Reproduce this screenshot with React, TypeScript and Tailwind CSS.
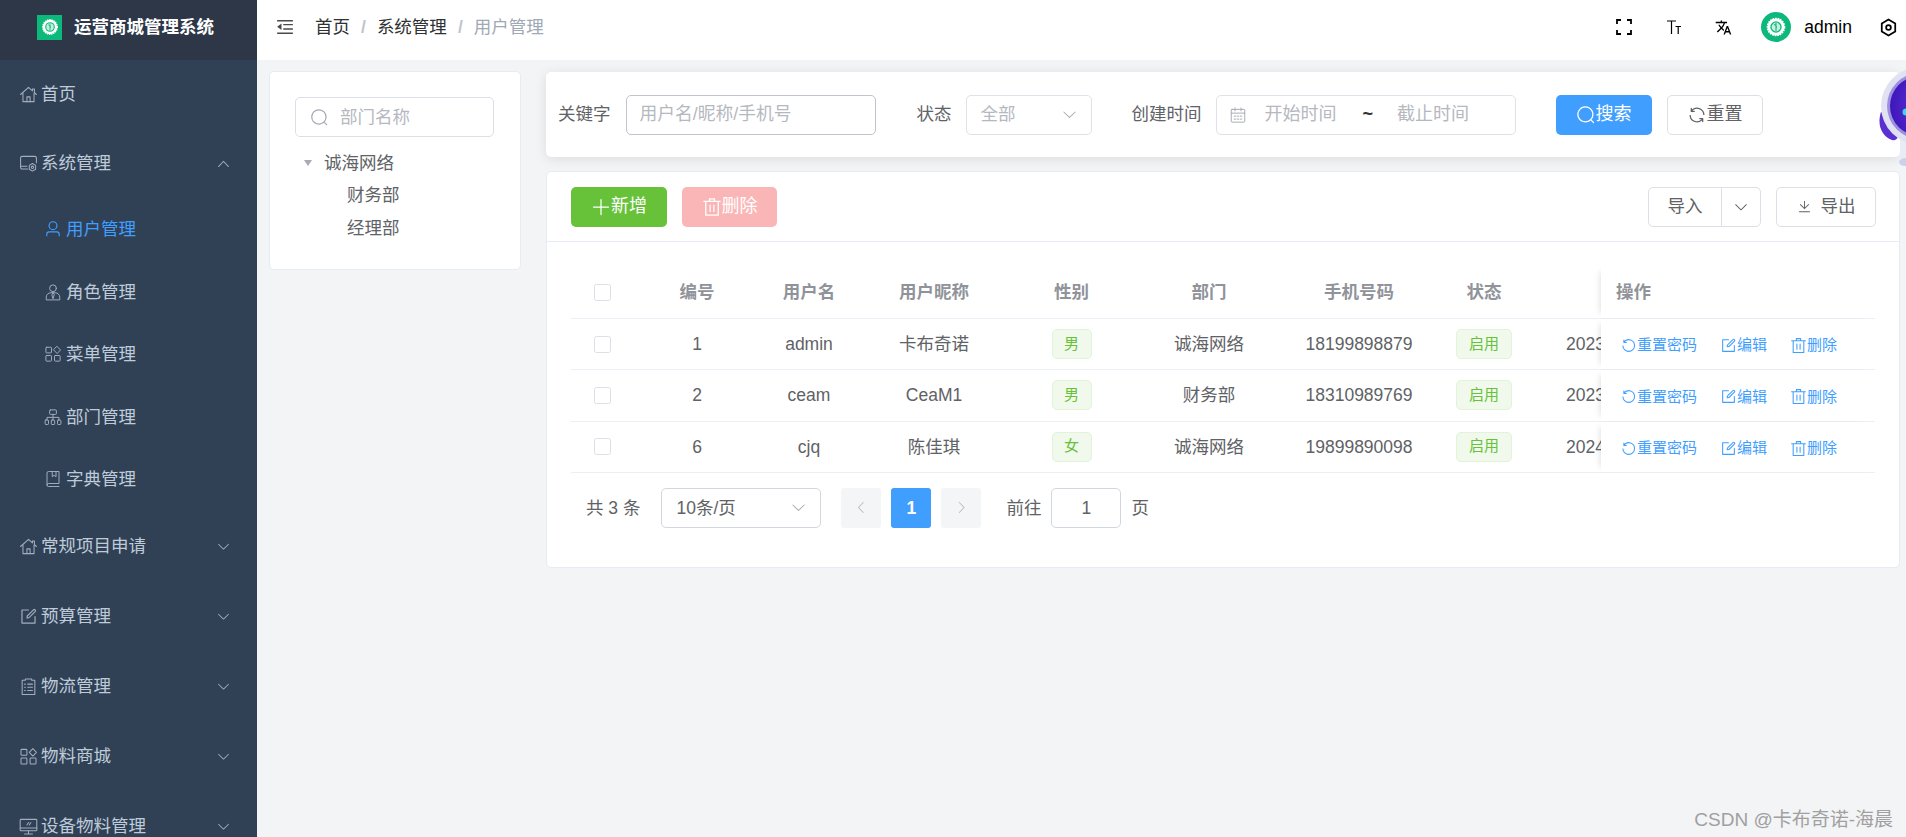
import type { ReactNode } from 'react';
import { MdTranslate } from 'react-icons/md';

type IconProps = { className?: string };

const Stroke = ({ className, children }: IconProps & { children: ReactNode }) => (
  <svg viewBox="0 0 24 24" fill="none" stroke="currentColor" strokeWidth="1.3" strokeLinejoin="round" strokeLinecap="round" className={className}>
    {children}
  </svg>
);

const Solid = ({ className, d }: IconProps & { d: string }) => (
  <svg viewBox="0 0 1024 1024" fill="currentColor" className={className}>
    <path d={d} />
  </svg>
);

const Icon = {
  Search: (p: IconProps) => <Solid {...p} d="m795.904 750.72 124.992 124.928a32 32 0 0 1-45.248 45.248L750.656 795.904a416 416 0 1 1 45.248-45.248zM480 832a352 352 0 1 0 0-704 352 352 0 0 0 0 704" />,
  Down: (p: IconProps) => <Solid {...p} d="M831.872 340.864 512 652.672 192.128 340.864a30.592 30.592 0 0 0-42.752 0 29.12 29.12 0 0 0 0 41.6L489.664 714.24a32 32 0 0 0 44.672 0l340.288-331.712a29.12 29.12 0 0 0 0-41.728 30.592 30.592 0 0 0-42.752 0z" />,
  Up: (p: IconProps) => <Solid {...p} d="m488.832 344.32-339.84 356.672a32 32 0 0 0 0 44.16l.384.384a29.44 29.44 0 0 0 42.688 0l320-335.872 319.872 335.872a29.44 29.44 0 0 0 42.688 0l.384-.384a32 32 0 0 0 0-44.16L535.168 344.32a32 32 0 0 0-46.336 0" />,
  Left: (p: IconProps) => <Solid {...p} d="M609.408 149.376 277.76 489.6a32 32 0 0 0 0 44.672l331.648 340.352a29.12 29.12 0 0 0 41.728 0 30.592 30.592 0 0 0 0-42.752L339.264 511.936l311.872-319.872a30.592 30.592 0 0 0 0-42.688 29.12 29.12 0 0 0-41.728 0z" />,
  Right: (p: IconProps) => <Solid {...p} d="M340.864 149.312a30.592 30.592 0 0 0 0 42.752L652.736 512 340.864 831.872a30.592 30.592 0 0 0 0 42.752 29.12 29.12 0 0 0 41.728 0L714.24 534.336a32 32 0 0 0 0-44.672L382.592 149.376a29.12 29.12 0 0 0-41.728 0z" />,
  Plus: (p: IconProps) => <Solid {...p} d="M480 480V128a32 32 0 0 1 64 0v352h352a32 32 0 1 1 0 64H544v352a32 32 0 1 1-64 0V544H128a32 32 0 0 1 0-64z" />,
  Trash: (p: IconProps) => <Solid {...p} d="M160 256H96a32 32 0 0 1 0-64h256V95.936a32 32 0 0 1 32-32h256a32 32 0 0 1 32 32V192h256a32 32 0 1 1 0 64h-64v672a32 32 0 0 1-32 32H192a32 32 0 0 1-32-32zm448-64v-64H416v64zM224 896h576V256H224zm192-128a32 32 0 0 1-32-32V416a32 32 0 0 1 64 0v320a32 32 0 0 1-32 32m192 0a32 32 0 0 1-32-32V416a32 32 0 0 1 64 0v320a32 32 0 0 1-32 32" />,
  Refresh: (p: IconProps) => <Solid {...p} d="M771.776 794.88A384 384 0 0 1 128 512h64a320 320 0 0 0 555.712 216.448H654.72a32 32 0 1 1 0-64h149.056a32 32 0 0 1 32 32v148.928a32 32 0 1 1-64 0v-50.56zM276.288 295.616h92.992a32 32 0 0 1 0 64H220.16a32 32 0 0 1-32-32V178.56a32 32 0 0 1 64 0v50.56A384 384 0 0 1 896.128 512h-64a320 320 0 0 0-555.776-216.384z" />,
  RefreshLeft: (p: IconProps) => <Solid {...p} d="M289.088 296.704h92.992a32 32 0 0 1 0 64H232.96a32 32 0 0 1-32-32V179.712a32 32 0 0 1 64 0v50.56a384 384 0 0 1 643.84 282.88 384 384 0 0 1-383.936 384 384 384 0 0 1-384-384h64a320 320 0 1 0 640 0 320 320 0 0 0-555.712-216.448z" />,
  Edit: (p: IconProps) => (
    <svg viewBox="0 0 1024 1024" fill="currentColor" className={p.className}>
      <path d="M832 512a32 32 0 1 1 64 0v352a32 32 0 0 1-32 32H160a32 32 0 0 1-32-32V160a32 32 0 0 1 32-32h352a32 32 0 0 1 0 64H192v640h640z" />
      <path d="m469.952 554.24 52.8-7.552L847.104 222.4a32 32 0 1 0-45.248-45.248L477.44 501.44l-7.552 52.8zm422.4-422.4a96 96 0 0 1 0 135.808l-331.84 331.84a32 32 0 0 1-18.112 9.088L436.8 623.68a32 32 0 0 1-36.224-36.224l15.104-105.6a32 32 0 0 1 9.024-18.112l331.904-331.84a96 96 0 0 1 135.744 0z" />
    </svg>
  ),
  Download: (p: IconProps) => <Solid {...p} d="M160 832h704a32 32 0 1 1 0 64H160a32 32 0 1 1 0-64m384-253.696 236.288-236.352 45.248 45.248L508.8 704 192 387.2l45.248-45.248L480 584.704V128h64z" />,
  User: (p: IconProps) => <Solid {...p} d="M512 512a192 192 0 1 0 0-384 192 192 0 0 0 0 384m0 64a256 256 0 1 1 0-512 256 256 0 0 1 0 512m320 320v-96a96 96 0 0 0-96-96H288a96 96 0 0 0-96 96v96a32 32 0 1 1-64 0v-96a160 160 0 0 1 160-160h448a160 160 0 0 1 160 160v96a32 32 0 1 1-64 0" />,
  Home: (p: IconProps) => (
    <Stroke {...p}>
      <path d="M2 12 12 3l5 4.5V5h2.500v4.800L22 12" />
      <path d="M5 10v11h14V10" />
      <path d="M10 21v-6h4v6" />
    </Stroke>
  ),
  System: (p: IconProps) => (
    <Stroke {...p}>
      <path d="M11 19H4a2 2 0 0 1-2-2V5a2 2 0 0 1 2-2h16a2 2 0 0 1 2 2v6" />
      <path d="M2 15.500h8" />
      <path d="m17 12 4 2.400v4.800L17 21.600l-4-2.400v-4.800z" />
      <circle cx="17" cy="16.800" r="1.500" />
    </Stroke>
  ),
  Role: (p: IconProps) => (
    <Stroke {...p}>
      <circle cx="12" cy="7" r="4.500" />
      <path d="M3 22v-3a6 6 0 0 1 6-6h6a6 6 0 0 1 6 6v3z" />
      <path d="m12 13-1.500 3 1.500 5 1.500-5z" />
    </Stroke>
  ),
  Menu: (p: IconProps) => (
    <Stroke {...p}>
      <rect x="2.500" y="3" width="7.500" height="7.500" rx="1" />
      <path d="m17.500 2 4.500 4.700-4.500 4.700L13 6.700z" />
      <rect x="2.500" y="14" width="7.500" height="7.500" rx="1" />
      <rect x="14" y="14" width="7.500" height="7.500" rx="1" />
    </Stroke>
  ),
  Dept: (p: IconProps) => (
    <Stroke {...p}>
      <rect x="7.500" y="2.500" width="9" height="6" rx="1" />
      <path d="M4 16v-3.500h16V16M12 8.500V16" />
      <rect x="1.500" y="16" width="4.500" height="6" rx="1" />
      <rect x="9.700" y="16" width="4.500" height="6" rx="1" />
      <rect x="18" y="16" width="4.500" height="6" rx="1" />
    </Stroke>
  ),
  Book: (p: IconProps) => (
    <Stroke {...p}>
      <path d="M4 20V4a2 2 0 0 1 2-2h14v16H6a2 2 0 0 0 0 4h14" />
      <path d="M11 2v7l2.500-2L16 9V2" />
    </Stroke>
  ),
  Doc: (p: IconProps) => (
    <Stroke {...p}>
      <path d="M4 4h4V2.500h8V4h4v18H4z" />
      <path d="M7 9h1M11 9h6M7 13h1M11 13h6M7 17h1M11 17h6" />
    </Stroke>
  ),
  Monitor: (p: IconProps) => (
    <Stroke {...p}>
      <rect x="1.500" y="3" width="21" height="14.500" rx="1" />
      <path d="M1.500 14h21M12 17.500V21M7 21.500h10M10 10l2-3M13 10l2-3" />
    </Stroke>
  ),
  Calendar: (p: IconProps) => (
    <Stroke {...p}>
      <rect x="3" y="4.500" width="18" height="17" rx="1" />
      <path d="M3 9.500h18M8 2.500v4M16 2.500v4M7 13.500h2M11 13.500h2M15 13.500h2M7 17.500h2M11 17.500h2M15 17.500h2" />
    </Stroke>
  ),
};

const Logo = ({ className }: IconProps) => (
  <svg viewBox="0 0 32 32" className={className}>
    <circle cx="16" cy="16" r="10.500" fill="#fff" stroke="#fff" strokeWidth="2" strokeDasharray="2 1.200" />
    <circle cx="16" cy="16" r="7" fill="#0cb87a" />
    <circle cx="16" cy="16" r="5.400" fill="#c9f0df" />
    <path d="M16 11v10M13.500 13c2 .3 3 1.600 3.200 4" fill="none" stroke="#0cb87a" strokeWidth="1.300" />
  </svg>
);

type NavItem = { label: string; icon: (p: IconProps) => ReactNode; arrow?: 'up' | 'down' };

const SUB_ITEMS: (NavItem & { active?: boolean })[] = [
  { label: '用户管理', icon: Icon.User, active: true },
  { label: '角色管理', icon: Icon.Role },
  { label: '菜单管理', icon: Icon.Menu },
  { label: '部门管理', icon: Icon.Dept },
  { label: '字典管理', icon: Icon.Book },
];

const LOWER_ITEMS: NavItem[] = [
  { label: '常规项目申请', icon: Icon.Home, arrow: 'down' },
  { label: '预算管理', icon: Icon.Edit, arrow: 'down' },
  { label: '物流管理', icon: Icon.Doc, arrow: 'down' },
  { label: '物料商城', icon: Icon.Menu, arrow: 'down' },
  { label: '设备物料管理', icon: Icon.Monitor, arrow: 'down' },
];

const TopItem = ({ item, tall }: { item: NavItem; tall?: boolean }) => (
  <div className={`flex shrink-0 items-center pl-[19px] pr-[26px] ${tall ? 'h-[70px]' : 'h-[69px]'}`}>
    <item.icon className="h-[19px] w-[19px] shrink-0 text-[#a3aebd]" />
    <span className="ml-[3px] flex-1">{item.label}</span>
    {item.arrow === 'up' && <Icon.Up className="h-[15px] w-[15px] text-[#a3aebd]" />}
    {item.arrow === 'down' && <Icon.Down className="h-[15px] w-[15px] text-[#a3aebd]" />}
  </div>
);

const Sidebar = () => (
  <aside className="flex w-[257px] shrink-0 flex-col overflow-hidden bg-[#304156] text-[17.5px] text-[#bfcbd9]">
    <div className="h-[60px] shrink-0 bg-[#2d3748]">
      <div className="flex h-[54px] items-center pl-[37px]">
        <div className="flex h-[25px] w-[25px] items-center justify-center bg-[#0cb87a]">
          <Logo className="h-[22px] w-[22px]" />
        </div>
        <span className="ml-[12px] font-bold text-white">运营商城管理系统</span>
      </div>
    </div>
    <TopItem item={{ label: '首页', icon: Icon.Home }} />
    <TopItem item={{ label: '系统管理', icon: Icon.System, arrow: 'up' }} />
    <div className="mb-[0.500px] flex shrink-0 flex-col">
      {SUB_ITEMS.map((s) => (
        <div key={s.label} className={`flex h-[62.500px] items-center pl-[44px] ${s.active ? 'text-[#409eff]' : ''}`}>
          <s.icon className={`h-[18px] w-[18px] shrink-0 ${s.active ? '' : 'text-[#a3aebd]'}`} />
          <span className="ml-[4px]">{s.label}</span>
        </div>
      ))}
    </div>
    {LOWER_ITEMS.map((it) => (
      <TopItem key={it.label} item={it} tall />
    ))}
  </aside>
);

const Navbar = () => (
  <header className="h-[60px] shrink-0 bg-white">
    <div className="flex h-[54px] items-center text-[17.5px] text-[#303133]">
      <svg viewBox="0 0 18 16" className="ml-[20px] h-[14px] w-[16px]" fill="#4a4a4a">
        <path d="M0 0h18v1.600H0zM7 4.500h11v1.600H7zM7 9.500h11v1.600H7zM0 14.400h18V16H0zM5 4v7.500L0 7.750z" />
      </svg>
      <span className="ml-[22px]">首页</span>
      <span className="mx-[11px] font-bold text-[#c0c4cc]">/</span>
      <span>系统管理</span>
      <span className="mx-[11px] font-bold text-[#c0c4cc]">/</span>
      <span className="text-[#a0a8b4]">用户管理</span>
      <div className="ml-auto flex items-center text-black">
        <svg viewBox="0 0 16 16" className="h-[16px] w-[16px]" fill="none" stroke="currentColor" strokeWidth="1.800">
          <path d="M1 5V1h4M11 1h4v4M15 11v4h-4M5 15H1v-4" />
        </svg>
        <svg viewBox="0 0 16 16" className="ml-[34px] h-[16px] w-[16px]" fill="none" stroke="currentColor" strokeWidth="1.200">
          <path d="M1 2h9M5.500 2v13M9.500 7.500H15M12.200 7.500V15" />
        </svg>
        <MdTranslate className="ml-[33px] h-[17px] w-[17px]" />
        <div className="ml-[29px] flex h-[30px] w-[30px] items-center justify-center rounded-full bg-[#0cb87a]">
          <Logo className="h-[26px] w-[26px]" />
        </div>
        <span className="ml-[13px]">admin</span>
        <svg viewBox="0 0 24 24" className="ml-[27px] mr-[8px] h-[19px] w-[19px]" fill="none" stroke="currentColor" strokeWidth="2.200">
          <path d="m12 2 8.500 5v10L12 22l-8.500-5V7z" />
          <circle cx="12" cy="12" r="3" />
        </svg>
      </div>
    </div>
  </header>
);

const TreePanel = () => (
  <div className="-mt-[1px] h-[199px] w-[252px] shrink-0 rounded-[5px] border border-[#e6ebf5] bg-white pl-[25px] pt-[25px] text-[17.5px] text-[#606266]">
    <div className="flex h-[40px] w-[199px] items-center rounded-[5px] border border-[#dcdfe6] pl-[14px] text-[#b5b8bf]">
      <Icon.Search className="h-[19px] w-[19px] text-[#a8abb2]" />
      <span className="ml-[11px]">部门名称</span>
    </div>
    <div className="mt-[10px] flex h-[32px] items-center">
      <span className="ml-[9px] h-0 w-0 border-x-[4.500px] border-t-[6px] border-x-transparent border-t-[#a8abb2]" />
      <span className="ml-[12px]">诚海网络</span>
    </div>
    <div className="flex h-[33px] items-center pl-[52px]">财务部</div>
    <div className="flex h-[33px] items-center pl-[52px]">经理部</div>
  </div>
);

const FilterBar = () => (
  <div className="flex h-[85px] shrink-0 items-center rounded-[5px] bg-white pl-[12px] text-[17.5px] text-[#606266] shadow-[0_2px_12px_rgba(0,0,0,0.1)]">
    <span>关键字</span>
    <div className="ml-[15px] flex h-[40px] w-[250px] items-center rounded-[5px] border border-[#c0c4cc] pl-[13px] text-[17.8px] text-[#b5b8bf]">用户名/昵称/手机号</div>
    <span className="ml-[41px]">状态</span>
    <div className="ml-[14px] flex h-[40px] w-[126px] items-center justify-between rounded-[5px] border border-[#dfe2e9] pl-[14px] pr-[13px] text-[#b5b8bf]">
      全部
      <Icon.Down className="h-[17px] w-[17px] text-[#a8abb2]" />
    </div>
    <span className="ml-[40px]">创建时间</span>
    <div className="ml-[14px] flex h-[40px] w-[300px] items-center rounded-[5px] border border-[#dfe2e9] pl-[12px] text-[18px] text-[#b5b8bf]">
      <Icon.Calendar className="h-[18px] w-[18px] text-[#a8abb2]" />
      <span className="ml-[18px] w-[72px]">开始时间</span>
      <span className="ml-[26px] font-bold text-[#303133]">~</span>
      <span className="ml-[24px]">截止时间</span>
    </div>
    <button className="ml-[40px] flex h-[40px] w-[96px] items-center justify-center rounded-[5px] bg-[#409eff] text-[18px] text-white">
      <Icon.Search className="h-[20px] w-[20px]" />
      搜索
    </button>
    <button className="ml-[15px] flex h-[40px] w-[96px] items-center justify-center rounded-[5px] border border-[#dcdfe6] text-[18px] text-[#606266]">
      <Icon.Refresh className="h-[20px] w-[20px]" />
      重置
    </button>
  </div>
);

const COLS = [
  { title: '编号', w: 'w-[126px]' },
  { title: '用户名', w: 'w-[98px]' },
  { title: '用户昵称', w: 'w-[152px]' },
  { title: '性别', w: 'w-[123px]' },
  { title: '部门', w: 'w-[152px]' },
  { title: '手机号码', w: 'w-[148px]' },
  { title: '状态', w: 'w-[102px]' },
];

const ROWS = [
  { id: 1, name: 'admin', nick: '卡布奇诺', sex: '男', dept: '诚海网络', phone: '18199898879', date: '2023-11-20 10:12:45' },
  { id: 2, name: 'ceam', nick: 'CeaM1', sex: '男', dept: '财务部', phone: '18310989769', date: '2023-12-06 14:30:18' },
  { id: 6, name: 'cjq', nick: '陈佳琪', sex: '女', dept: '诚海网络', phone: '19899890098', date: '2024-01-09 09:05:33' },
];

const Tag = ({ children, w }: { children: ReactNode; w: string }) => (
  <span className={`inline-flex h-[30px] items-center justify-center rounded-[5px] border border-[#e1f3d8] bg-[#f0f9eb] text-[15px] text-[#67c23a] ${w}`}>{children}</span>
);

const Checkbox = () => (
  <div className="flex w-[63px] shrink-0 justify-center">
    <span className="h-[17px] w-[17px] rounded-[2.500px] border border-[#dcdfe6] bg-white" />
  </div>
);

const ACTION_CELL = 'relative z-10 flex h-full w-[274px] shrink-0 items-center bg-white shadow-[-6px_0_6px_-5px_rgba(0,0,0,0.12)]';

const UserTable = () => (
  <div className="ml-[24px] mt-[25px] w-[1304px] text-[17.5px] text-[#606266]">
    <div className="flex h-[52px] items-center border-b border-[#ebeef5] font-bold text-[#909399]">
      <Checkbox />
      {COLS.map((c) => (
        <div key={c.title} className={`${c.w} shrink-0 text-center`}>{c.title}</div>
      ))}
      <div className="w-[66px] shrink-0" />
      <div className={`${ACTION_CELL} pl-[15px]`}>操作</div>
    </div>
    {ROWS.map((r) => (
      <div key={r.id} className="flex h-[51.250px] items-center border-b border-[#ebeef5]">
        <Checkbox />
        <div className="w-[126px] shrink-0 text-center">{r.id}</div>
        <div className="w-[98px] shrink-0 text-center">{r.name}</div>
        <div className="w-[152px] shrink-0 text-center">{r.nick}</div>
        <div className="w-[123px] shrink-0 text-center"><Tag w="w-[40px]">{r.sex}</Tag></div>
        <div className="w-[152px] shrink-0 text-center">{r.dept}</div>
        <div className="w-[148px] shrink-0 text-center">{r.phone}</div>
        <div className="w-[102px] shrink-0 text-center"><Tag w="w-[56px]">启用</Tag></div>
        <div className="w-[66px] shrink-0 overflow-hidden whitespace-nowrap pl-[31px]">{r.date}</div>
        <div className={`${ACTION_CELL} pl-[19px] pt-[3px] text-[15px] text-[#409eff]`}>
          <Icon.RefreshLeft className="h-[17px] w-[17px]" />
          <span>重置密码</span>
          <Icon.Edit className="ml-[23px] h-[17px] w-[17px]" />
          <span>编辑</span>
          <Icon.Trash className="ml-[23px] h-[17px] w-[17px]" />
          <span>删除</span>
        </div>
      </div>
    ))}
  </div>
);

const Pagination = () => (
  <div className="ml-[39px] mt-[15px] flex h-[40px] items-center text-[17.5px] text-[#606266]">
    <span className="whitespace-pre">共 3 条</span>
    <div className="ml-[21px] flex h-[40px] w-[160px] items-center justify-between rounded-[5px] border border-[#d3d6de] pl-[14px] pr-[13px]">
      10条/页
      <Icon.Down className="h-[17px] w-[17px] text-[#a8abb2]" />
    </div>
    <div className="ml-[20px] flex h-[40px] w-[40px] items-center justify-center rounded-[3px] bg-[#f4f5f7] text-[#b4b7bd]">
      <Icon.Left className="h-[15px] w-[15px]" />
    </div>
    <div className="ml-[10px] flex h-[40px] w-[40px] items-center justify-center rounded-[3px] bg-[#409eff] font-bold text-white">1</div>
    <div className="ml-[10px] flex h-[40px] w-[40px] items-center justify-center rounded-[3px] bg-[#f4f5f7] text-[#b4b7bd]">
      <Icon.Right className="h-[15px] w-[15px]" />
    </div>
    <span className="ml-[25px]">前往</span>
    <div className="ml-[10px] flex h-[40px] w-[70px] items-center justify-center rounded-[5px] border border-[#d3d6de]">1</div>
    <span className="ml-[10px]">页</span>
  </div>
);

const TableCard = () => (
  <div className="h-[397px] shrink-0 rounded-[5px] border border-[#e6ebf5] bg-white">
    <div className="flex h-[70px] items-center justify-between border-b border-[#e6ebf5] pl-[24px] pr-[23px] text-[17.5px]">
      <div className="flex items-center gap-[15px] text-[18px] text-white">
        <button className="flex h-[40px] w-[96px] items-center justify-center rounded-[5px] bg-[#67c23a]">
          <Icon.Plus className="h-[20px] w-[20px]" />
          新增
        </button>
        <button className="flex h-[40px] w-[95px] items-center justify-center rounded-[5px] bg-[#fab6b6]">
          <Icon.Trash className="h-[20px] w-[20px]" />
          删除
        </button>
      </div>
      <div className="flex items-center gap-[15px] text-[#606266]">
        <div className="flex h-[40px] w-[113px] items-center rounded-[5px] border border-[#dcdfe6]">
          <span className="flex h-full w-[73px] items-center justify-center border-r border-[#dcdfe6]">导入</span>
          <Icon.Down className="ml-[11px] h-[16px] w-[16px]" />
        </div>
        <div className="flex h-[40px] w-[100px] items-center justify-center rounded-[5px] border border-[#dcdfe6]">
          <Icon.Download className="h-[15px] w-[15px]" />
          <span className="ml-[9px]">导出</span>
        </div>
      </div>
    </div>
    <UserTable />
    <Pagination />
  </div>
);

const Assistant = () => (
  <svg viewBox="0 0 28 100" className="absolute right-0 top-[66px] h-[100px] w-[28px]">
    <defs>
      <radialGradient id="visor" cx="80%" cy="50%" r="80%">
        <stop offset="0%" stopColor="#6a3ff0" />
        <stop offset="100%" stopColor="#3e17b8" />
      </radialGradient>
    </defs>
    <rect x="22" y="70" width="6" height="30" fill="#e9ebf5" />
    <ellipse cx="28" cy="96" rx="7" ry="4" fill="#ccd0ec" />
    <path d="M3 46C-1 58 3 70 14 74c3 1 5-1 6-3L10 50z" fill="#5a30d0" />
    <circle cx="42" cy="40" r="39" fill="#e0e2f2" />
    <circle cx="42" cy="40" r="33" fill="#9c8fe0" />
    <circle cx="42" cy="40" r="30" fill="url(#visor)" />
    <circle cx="28" cy="46" r="3.500" fill="#39d7f0" />
  </svg>
);

export default function App() {
  return (
    <div className="relative flex h-[837px] w-[1906px] overflow-hidden font-['Liberation_Sans','Noto_Sans_CJK_SC',sans-serif]">
      <Sidebar />
      <main className="flex min-w-0 flex-1 flex-col bg-[#f3f4f6]">
        <Navbar />
        <div className="flex gap-[25px] pl-[12px] pr-[6px] pt-[12px]">
          <TreePanel />
          <div className="flex min-w-0 flex-1 flex-col gap-[14px]">
            <FilterBar />
            <TableCard />
          </div>
        </div>
      </main>
      <Assistant />
      <span className="absolute bottom-[3px] right-[13px] text-[19px] text-[#a0a0a0]">CSDN @卡布奇诺-海晨</span>
    </div>
  );
}
